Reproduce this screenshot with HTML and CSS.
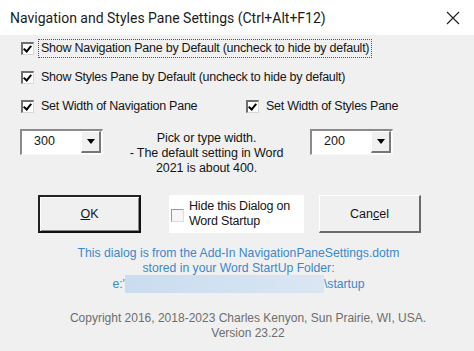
FILE: index.html
```html
<!DOCTYPE html>
<html>
<head>
<meta charset="utf-8">
<link rel="stylesheet" href="styles.css">
</head>
<body>
<div class="window">
  <div class="titlebar">
    <span class="title">Navigation and Styles Pane Settings (Ctrl+Alt+F12)</span>
    <svg class="close" width="14" height="14" viewBox="0 0 14 14"><path d="M1 1 L13 13 M13 1 L1 13" stroke="#1b1b1b" stroke-width="1.1" fill="none"/></svg>
  </div>
  <div class="body">
    <div class="checks">
      <div class="check"><span class="box on"></span><span class="label focus">Show Navigation Pane by Default (uncheck to hide by default)</span></div>
      <div class="check"><span class="box on"></span><span class="label">Show Styles Pane by Default (uncheck to hide by default)</span></div>
      <div class="check-row">
        <div class="check"><span class="box on"></span><span class="label">Set Width of Navigation Pane</span></div>
        <div class="check second"><span class="box on"></span><span class="label">Set Width of Styles Pane</span></div>
      </div>
    </div>
    <div class="width-row">
      <div class="combo"><span class="value">300</span><span class="drop"><svg width="8" height="5" viewBox="0 0 8 5"><path d="M0 0 H8 L4 5 Z" fill="#000"/></svg></span></div>
      <div class="note">Pick or type width.<br>- The default setting in Word<br>2021 is about 400.</div>
      <div class="combo"><span class="value">200</span><span class="drop"><svg width="8" height="5" viewBox="0 0 8 5"><path d="M0 0 H8 L4 5 Z" fill="#000"/></svg></span></div>
    </div>
    <div class="button-row">
      <div class="btn default"><span><u>O</u>K</span></div>
      <div class="hide-box"><span class="box"></span><span class="hide-label">Hide this Dialog on<br>Word Startup</span></div>
      <div class="btn cancel"><span>Can<u>c</u>el</span></div>
    </div>
    <div class="info">
      <div>This dialog is from the Add-In NavigationPaneSettings.dotm</div>
      <div>stored in your Word StartUp Folder:</div>
      <div>e:'<span class="blur"></span>\startup</div>
    </div>
    <div class="copyright">
      <div>Copyright 2016, 2018-2023 Charles Kenyon, Sun Prairie, WI, USA.</div>
      <div>Version 23.22</div>
    </div>
  </div>
</div>
</body>
</html>
```
FILE: styles.css
```css
html, body {
  margin: 0;
  padding: 0;
  background: #f0f0f0;
}
.window {
  width: 474px;
  height: 351px;
  display: flex;
  flex-direction: column;
  font-family: "Liberation Sans", Arial, sans-serif;
  color: #151515;
  overflow: hidden;
}
.titlebar {
  flex: none;
  height: 35px;
  background: #fff;
  display: flex;
  align-items: center;
  justify-content: space-between;
  padding: 0 14px 0 10px;
  box-sizing: border-box;
}
.title {
  font-family: Roboto, "Noto Sans", sans-serif;
  font-size: 14px;
  color: #1b1b1b;
  padding-top: 1px;
}
.close {
  display: block;
}
.body {
  flex: 1;
  background: #f0f0f0;
  display: flex;
  flex-direction: column;
}
.checks {
  display: flex;
  flex-direction: column;
  gap: 11px;
  padding: 4px 0 0 21px;
}
.check {
  display: flex;
  align-items: center;
  height: 18px;
  font-size: 12.5px;
  letter-spacing: -0.25px;
}
.check-row {
  display: flex;
}
.check-row .check:first-child {
  width: 225px;
}
.box {
  width: 13px;
  height: 13px;
  box-sizing: border-box;
  background: #fff;
  border-top: 2px solid #6e6e6e;
  border-left: 2px solid #6e6e6e;
  border-right: 1px solid #d8d8d8;
  border-bottom: 1px solid #d8d8d8;
  position: relative;
  flex: none;
}
.box.on::after {
  content: "";
  position: absolute;
  left: 2px;
  top: 0px;
  width: 3px;
  height: 6px;
  border-right: 2px solid #000;
  border-bottom: 2px solid #000;
  transform: rotate(40deg);
}
.label {
  margin-left: 4px;
  padding: 1px 2px;
  border: 1px solid transparent;
  line-height: 15px;
}
.label.focus {
  border: 1px dotted #555;
}
.width-row {
  display: flex;
  align-items: flex-start;
  margin-top: 14px;
  padding-left: 20px;
}
.combo {
  width: 83px;
  height: 26px;
  box-sizing: border-box;
  background: #fff;
  border-top: 2px solid #8a8a8a;
  border-left: 2px solid #8a8a8a;
  border-right: 1px solid #fafafa;
  border-bottom: 1px solid #fafafa;
  display: flex;
  align-items: stretch;
  justify-content: space-between;
}
.value {
  font-size: 12.5px;
  padding-left: 12px;
  line-height: 18px;
  padding-top: 1px;
}
.drop {
  width: 20px;
  margin: 0 1px 1px 0;
  background: #f0f0f0;
  border-right: 2px solid #777;
  border-bottom: 2px solid #777;
  border-top: 1px solid #fff;
  border-left: 1px solid #fff;
  box-sizing: border-box;
  display: flex;
  align-items: center;
  justify-content: center;
}
.note {
  width: 207px;
  text-align: center;
  font-size: 12.5px;
  letter-spacing: -0.1px;
  line-height: 15px;
  margin-top: 2px;
}
.button-row {
  display: flex;
  align-items: flex-start;
  margin-top: 19px;
  padding-left: 38px;
}
.btn {
  height: 38px;
  box-sizing: border-box;
  display: flex;
  align-items: center;
  justify-content: center;
  font-size: 12.5px;
  background: #f0f0f0;
}
.btn.default {
  width: 103px;
  border: 2px solid #222;
  border-right-color: #111;
  border-bottom-color: #111;
  box-shadow: inset 1px 1px 0 #fff, inset -1px -1px 0 #888;
}
.btn.cancel {
  width: 102px;
  margin-left: 15px;
  border-top: 1px solid #fff;
  border-left: 1px solid #fff;
  border-right: 2px solid #6a6a6a;
  border-bottom: 2px solid #6a6a6a;
}
.hide-box {
  width: 135px;
  height: 38px;
  margin-left: 28px;
  background: #fff;
  display: flex;
  align-items: center;
  padding-left: 2px;
  box-sizing: border-box;
}
.hide-box .box {
  border-top: 1px solid #999;
  border-left: 1px solid #999;
  border-right: 1px solid #ddd;
  border-bottom: 1px solid #ddd;
  background: #f6f6f6;
  margin-top: 3px;
}
.hide-label {
  font-size: 12.5px;
  letter-spacing: -0.2px;
  line-height: 15px;
  margin-left: 5px;
}
.info {
  margin-top: 13px;
  padding-left: 3px;
  text-align: center;
  color: #3c87cd;
  font-size: 12.2px;
  line-height: 14.5px;
}
.blur {
  display: inline-block;
  width: 199px;
  height: 18px;
  vertical-align: -5px;
  background: linear-gradient(90deg, #cadcef, #d3e2f1 60%, #dbe6f2);
}
.copyright {
  margin-top: 18px;
  padding-left: 22px;
  text-align: center;
  color: #6e6e6e;
  font-size: 12px;
  line-height: 15px;
}
```
